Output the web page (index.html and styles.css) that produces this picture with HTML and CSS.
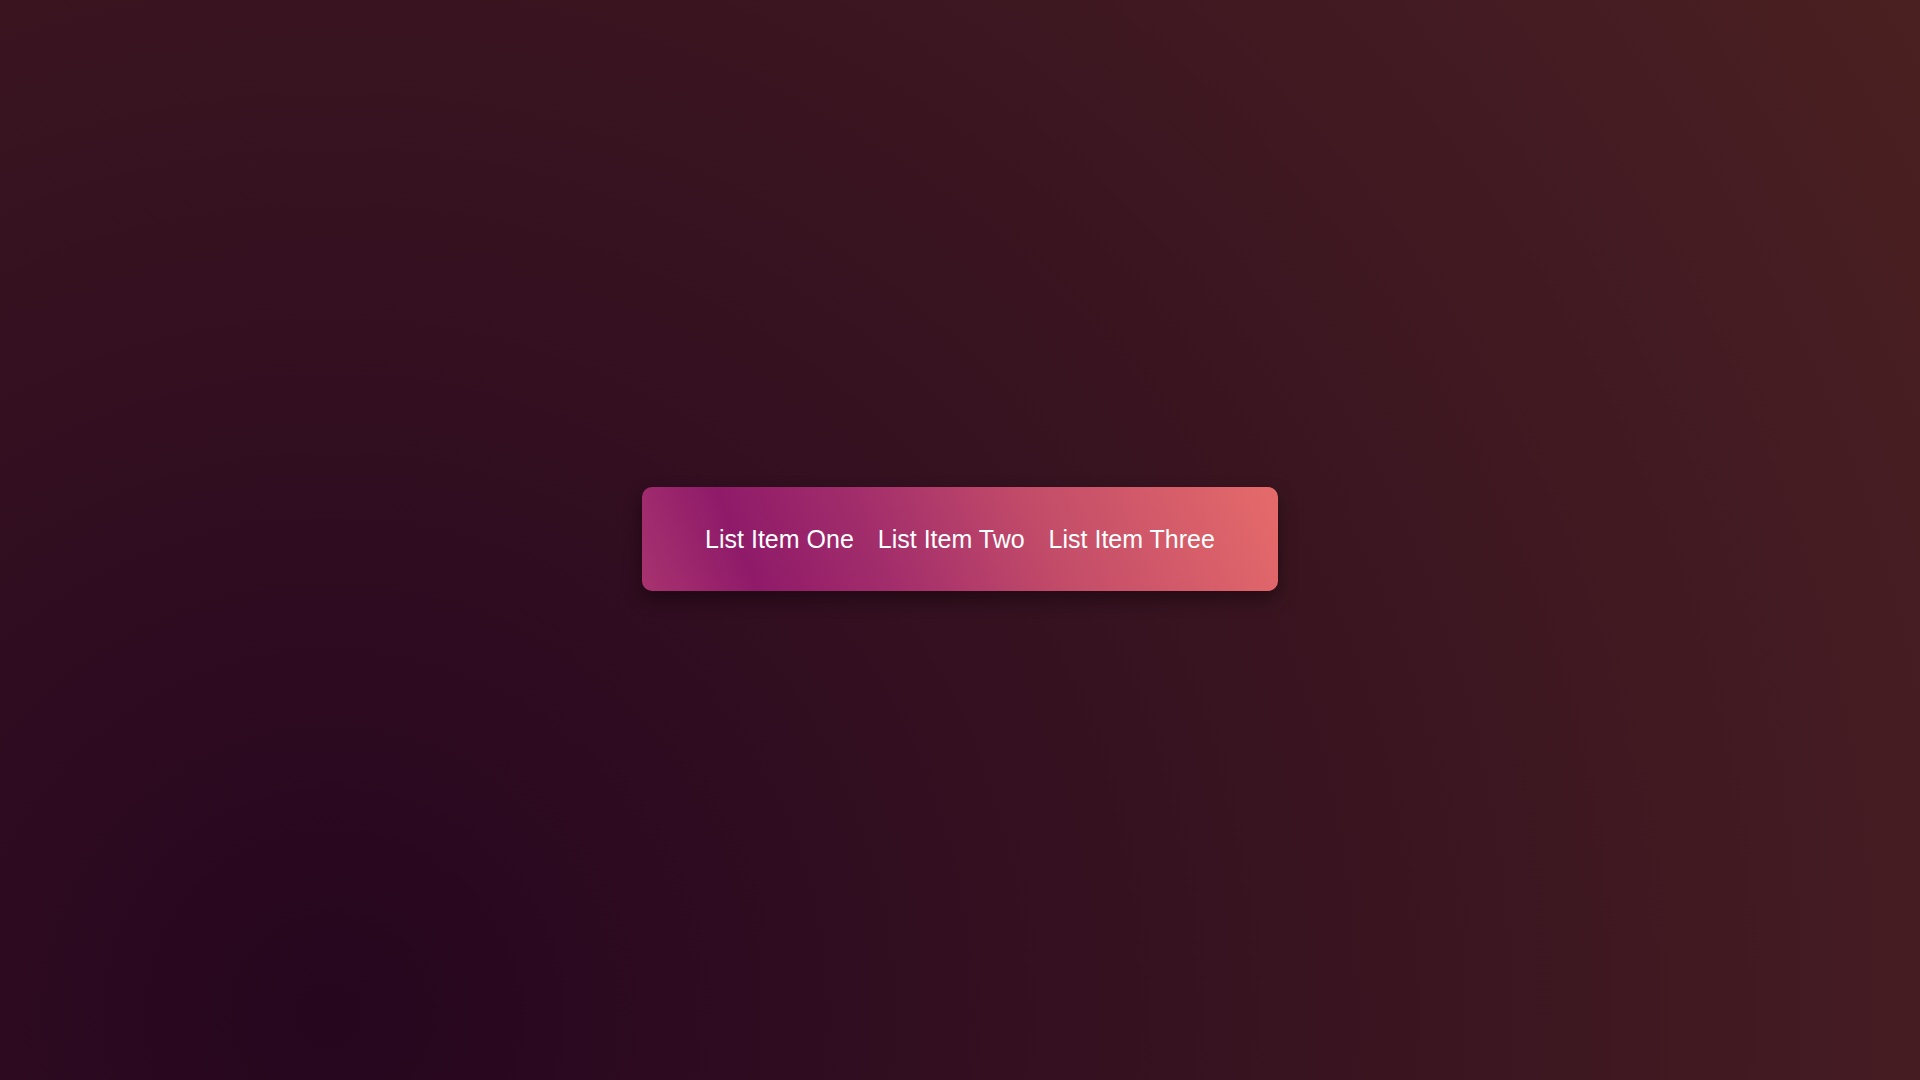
FILE: index.html
```html
<!DOCTYPE html>
<html lang="en">
<head>
<meta charset="utf-8">
<title>List</title>
<link rel="stylesheet" href="styles.css">
</head>
<body>
  <main class="stage">
    <ul class="menu">
      <li class="menu-item">List Item One</li>
      <li class="menu-item">List Item Two</li>
      <li class="menu-item">List Item Three</li>
    </ul>
  </main>
</body>
</html>
```

FILE: styles.css
```css
html, body {
  margin: 0;
  padding: 0;
  height: 100%;
}

body {
  font-family: "Liberation Sans", Arial, sans-serif;
  background: radial-gradient(circle at 330px 1016px,
    #25061e 0px,
    #2d0a20 340px,
    #3a1520 1068px,
    #451c22 1591px,
    #4a2020 1887px);
  overflow: hidden;
}

.stage {
  height: 100vh;
  display: flex;
  align-items: center;
  justify-content: center;
}

.menu {
  list-style: none;
  margin: 0 0 2px 0;
  padding: 0 63px;
  height: 104px;
  box-sizing: border-box;
  display: flex;
  align-items: center;
  justify-content: center;
  gap: 24px;
  border-radius: 10px;
  background: linear-gradient(68deg,
    #a8336f 0%,
    #8f1a69 17%,
    #a32e6b 38%,
    #c24b69 62%,
    #e56b6a 100%);
  box-shadow: 0 8px 18px rgba(10, 0, 5, 0.45);
}

.menu-item {
  color: #ffffff;
  font-size: 25px;
  line-height: 29px;
  white-space: nowrap;
}
```
